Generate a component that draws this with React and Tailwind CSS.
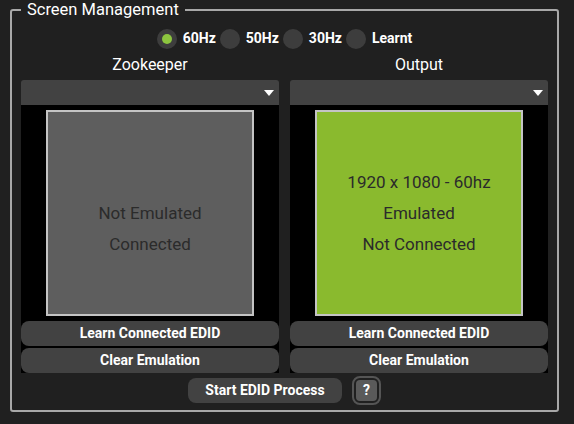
import React, { useState } from "react";

const cx = (...a) => a.filter(Boolean).join(" ");

const RATES = ["60Hz", "50Hz", "30Hz", "Learnt"];

function Radio({ label, checked, onClick }) {
  return (
    <button type="button" onClick={onClick} className="flex items-center gap-[6px]">
      <span className="grid h-5 w-5 place-items-center rounded-full bg-[#3d3d3d]">
        {checked ? <span className="h-[10px] w-[10px] rounded-full bg-[#8dc63f]" /> : null}
      </span>
      <span className="text-[14px] font-bold text-white">{label}</span>
    </button>
  );
}

function Dropdown() {
  return (
    <div className="flex h-[25px] items-center justify-end rounded-t-[3px] bg-[#424242] pr-[5px]">
      <svg width="10" height="6" viewBox="0 0 10 6" className="mt-[1px]">
        <path d="M0 0 L10 0 L5 6 Z" fill="#fff" />
      </svg>
    </div>
  );
}

function Btn({ children }) {
  return (
    <button
      type="button"
      className="h-[25px] w-full rounded-[8px] bg-[#424242] text-[14px] font-bold text-white"
    >
      {children}
    </button>
  );
}

function Panel({ title, fill, lines }) {
  return (
    <div className="flex flex-col">
      <div className="mb-[5px] h-[20px] text-center text-[16px] leading-[20px] text-white">{title}</div>
      <Dropdown />
      <div className="flex flex-col bg-black">
        <div className="flex justify-center pt-[5px] pb-[5px]">
          <div
            className={cx(
              "flex h-[206px] w-[208px] flex-col items-center justify-center gap-[9px] border-2 border-[#c4c4c4] text-[17px] leading-[22px] text-[#2b2b2b]",
              fill,
            )}
          >
            {lines.map((l, i) => (
              <div key={i} className="h-[22px]">{l}</div>
            ))}
          </div>
        </div>
        <div className="flex flex-col gap-[2px]">
          <Btn>Learn Connected EDID</Btn>
          <Btn>Clear Emulation</Btn>
        </div>
      </div>
    </div>
  );
}

export default function App() {
  const [rate, setRate] = useState("60Hz");

  return (
    <div
      className="h-[424px] w-[574px] overflow-hidden bg-[#202020]"
      style={{ fontFamily: "Roboto, 'Liberation Sans', sans-serif" }}
    >
      <fieldset className="ml-[10px] w-[549px] rounded-[3px] border-2 border-[#a8a8a8] px-[9px] pb-[5px]">
        <legend className="ml-0 px-[6px] text-[16.5px] leading-[20px] text-white">Screen Management</legend>

        {/* refresh rate */}
        <div className="mt-[8px] flex justify-center gap-[4px]">
          {RATES.map((r) => (
            <Radio key={r} label={r} checked={rate === r} onClick={() => setRate(r)} />
          ))}
        </div>

        <div className="mt-[6px] grid grid-cols-2 gap-[11px]">
          <Panel title="Zookeeper" fill="bg-[#5e5e5e]" lines={["", "Not Emulated", "Connected"]} />
          <Panel
            title="Output"
            fill="bg-[#8aba2e]"
            lines={["1920 x 1080 - 60hz", "Emulated", "Not Connected"]}
          />
        </div>

        <div className="mt-[3px] flex items-center justify-center gap-[10px]">
          <button
            type="button"
            className="h-[25px] w-[154px] rounded-[8px] bg-[#424242] text-[14px] font-bold text-white"
          >
            Start EDID Process
          </button>
          <button
            type="button"
            className="grid h-[29px] w-[29px] place-items-center rounded-[8px] border-2 border-[#555]"
          >
            <span className="grid h-[21px] w-[21px] place-items-center rounded-[4px] bg-[#5a5a5a] text-[14px] font-bold text-white">
              ?
            </span>
          </button>
        </div>
      </fieldset>
    </div>
  );
}
